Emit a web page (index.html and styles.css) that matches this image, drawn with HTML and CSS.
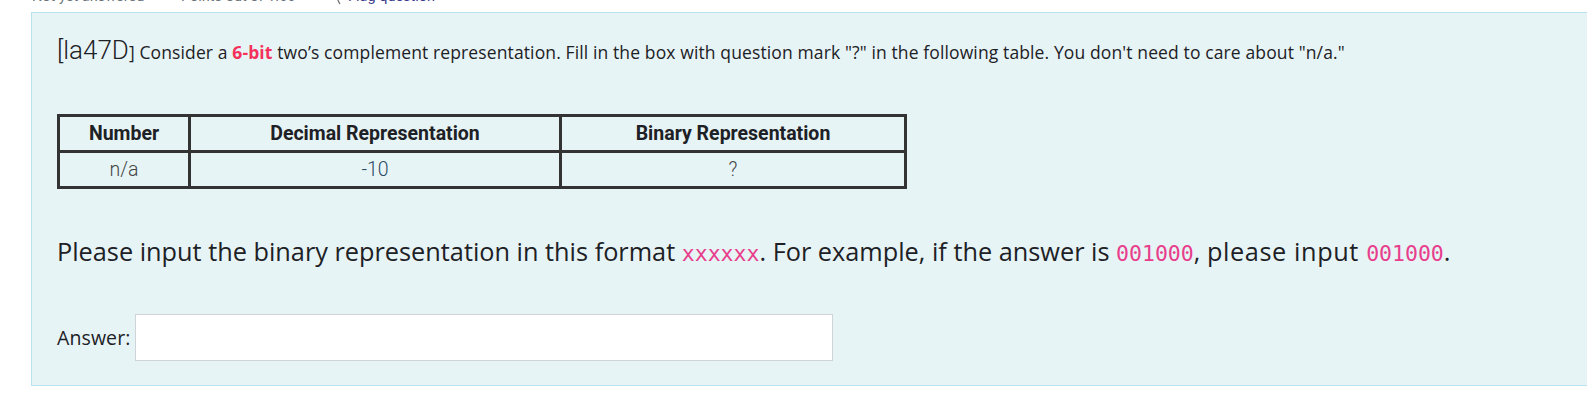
FILE: index.html
```html
<!DOCTYPE html>
<html lang="en">
<head>
<meta charset="utf-8">
<title>Question</title>
<link rel="stylesheet" href="styles.css">
</head>
<body>
<div class="meta">
  <span class="state">Not yet answered</span>
  <span class="grade">Points out of 1.00</span>
  <span class="flag"><svg class="flag-icon" width="10" height="16" viewBox="0 0 10 16"><path d="M7 1 Q2 8 7 15" fill="none" stroke="#777" stroke-width="1.3"/></svg>Flag question</span>
</div>
<div class="qbox">
  <p class="qtext"><span class="tag">[la47D</span>] Consider a <strong class="hl">6-bit</strong> two’s complement representation. Fill in the box with question mark "?" in the following table. You don't need to care about "n/a."</p>
  <table class="qtable">
    <thead>
      <tr><th class="c1">Number</th><th class="c2">Decimal Representation</th><th class="c3">Binary Representation</th></tr>
    </thead>
    <tbody>
      <tr><td>n/a</td><td class="dec">-10</td><td>?</td></tr>
    </tbody>
  </table>
  <p class="prompt">Please input the binary representation in this format <code>xxxxxx</code>. For example, if the answer is <code>001000</code>, <span class="tail">please input <code>001000</code>.</span></p>
  <div class="answer">
    <label class="answer-label" for="ans">Answer:</label>
    <input class="answer-input" id="ans" type="text">
  </div>
</div>
</body>
</html>
```

FILE: styles.css
```css
html, body {
  margin: 0;
  padding: 0;
  background: #fff;
  overflow: hidden;
}
body {
  font-family: "Open Sans", "Noto Sans", sans-serif;
  color: #1d2125;
  width: 1587px;
  height: 403px;
}
.meta {
  display: flex;
  align-items: center;
  padding-left: 32px;
  margin-top: -13px;
  height: 20px;
  font-size: 14.5px;
  line-height: 20px;
  color: #6a737b;
  font-family: "Roboto", sans-serif;
}
.state { width: 149px; }
.grade { width: 152px; }
.flag { color: #3c3a8c; display: flex; align-items: center; gap: 5px; }
.flag-icon { display: block; }
.qbox {
  margin-left: 31px;
  margin-right: -20px;
  margin-top: 5px;
  background: #e7f4f6;
  border: 1px solid #b8e2ee;
  padding: 19px 0 24px 25px;
}
.qtext {
  margin: 0;
  font-size: 17.5px;
  line-height: 36px;
  letter-spacing: 0.12px;
}
.tag {
  font-family: "Roboto", sans-serif;
  font-weight: 300;
  font-size: 26px;
  letter-spacing: 0;
}
.hl {
  color: #f3315a;
  font-weight: 700;
}
.qtable {
  margin-top: 44px;
  border-collapse: collapse;
  width: 850px;
  font-family: "Roboto", sans-serif;
  font-size: 19.5px;
}
.qtable th, .qtable td {
  border: 3px solid #333;
  text-align: center;
  height: 33px;
  padding: 0;
}
.qtable th {
  font-weight: 700;
  color: #1d2125;
}
.qtable td {
  font-weight: 300;
  color: #444;
}
.qtable td.dec { color: #2b4a63; }
.c1 { width: 128px; }
.c2 { width: 368px; }
.prompt {
  margin: 44px 0 0 0;
  font-size: 25.3px;
  line-height: 36px;
  letter-spacing: 0;
}
.prompt .tail {
  letter-spacing: 0.6px;
}
.prompt code {
  font-family: "DejaVu Sans Mono", monospace;
  font-size: 21.5px;
  color: #e83e8c;
  letter-spacing: 0;
}
.answer {
  display: flex;
  align-items: center;
  margin-top: 42px;
  gap: 5px;
}
.answer-label {
  font-size: 19.5px;
  letter-spacing: 0.1px;
}
.answer-input {
  width: 698px;
  height: 47px;
  box-sizing: border-box;
  border: 1px solid #ced4da;
  background: #fff;
  margin: 0;
}
```
